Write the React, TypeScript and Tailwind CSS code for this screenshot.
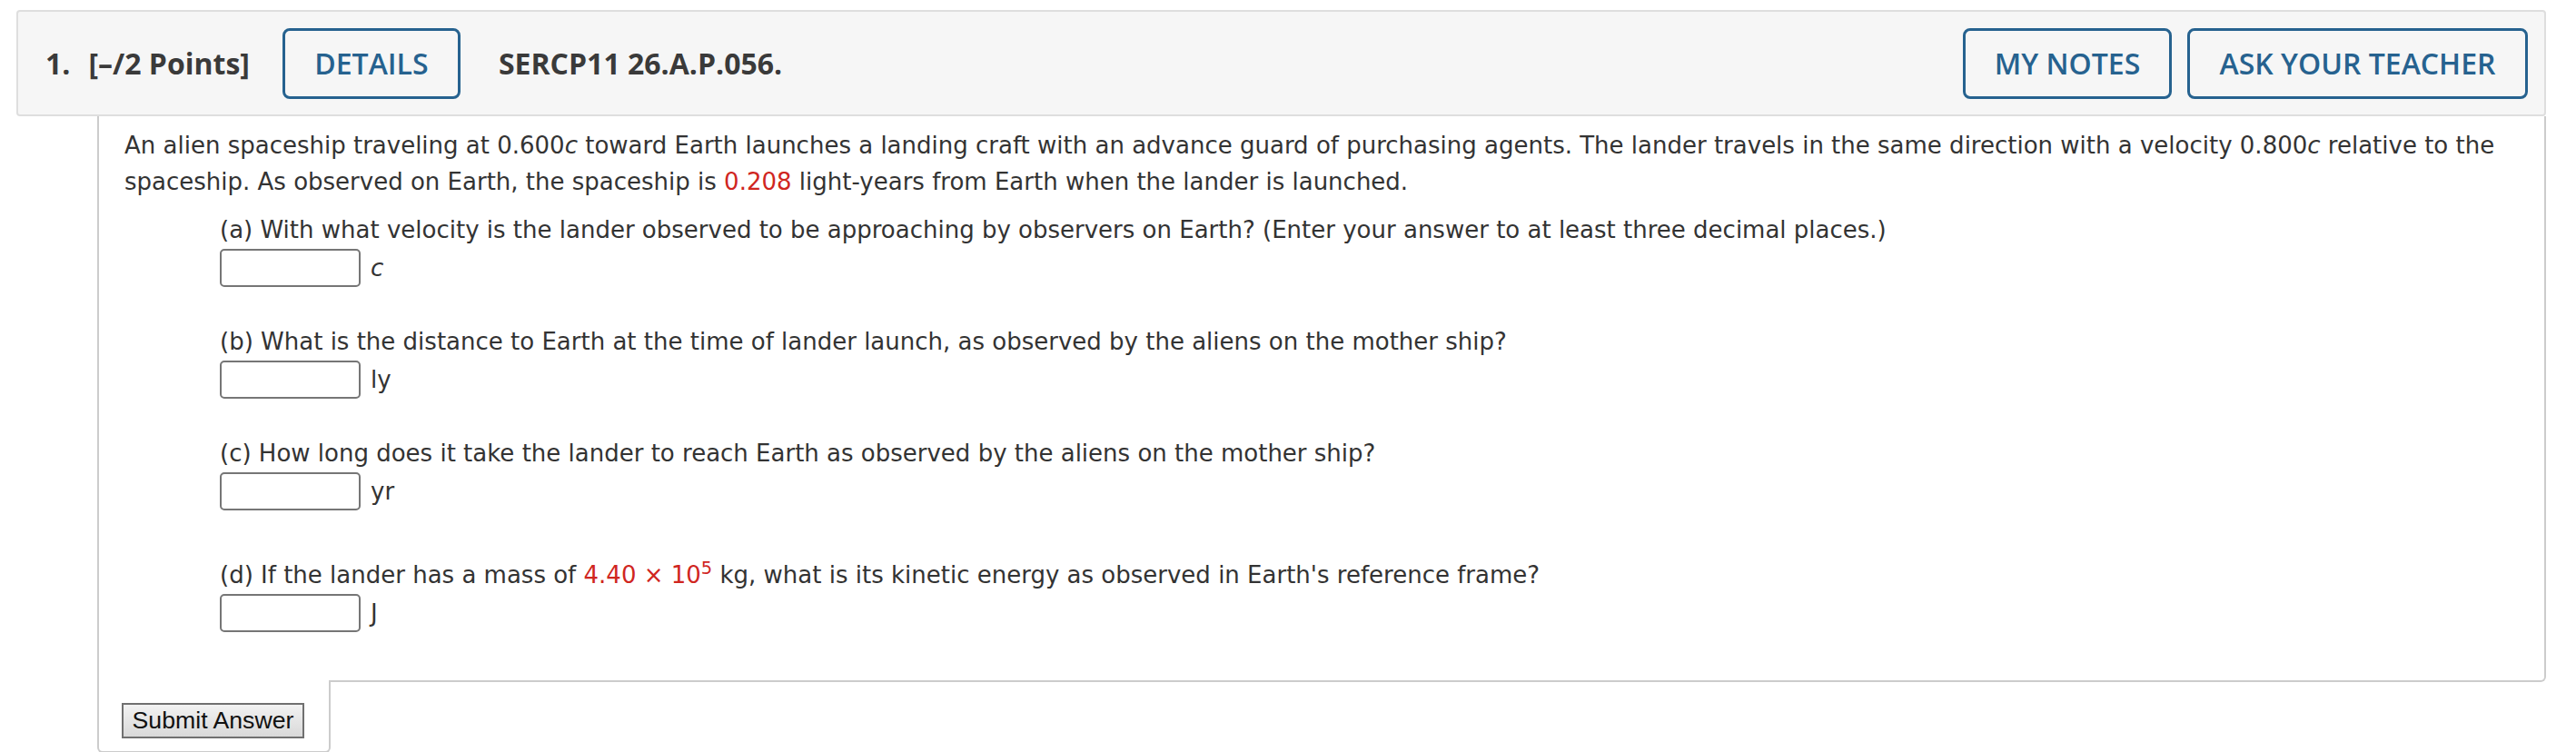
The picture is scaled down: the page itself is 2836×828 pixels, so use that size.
import React from 'react'

// Body text is Verdana on the original page; DejaVu Sans is the closest installed face.
const bodyFont = "font-[family-name:Verdana,'DejaVu_Sans',sans-serif]"
const headFont = "font-[family-name:'Open_Sans',sans-serif]"

function OutlineButton({ label, width }: { label: string; width: string }) {
  return (
    <button
      type="button"
      className={`${width} flex h-[78px] items-center justify-center rounded-[8px] border-[3px] border-[#26628f] bg-transparent text-[32px] font-semibold text-[#26628f] ${headFont}`}
    >
      {label}
    </button>
  )
}

function Answer({ unit, italic = false }: { unit: string; italic?: boolean }) {
  return (
    <div className="mt-px flex items-center">
      <input
        type="text"
        readOnly
        className="h-[42px] w-[155px] rounded-[5px] border-2 border-[#767676] bg-white outline-none"
      />
      <span className={italic ? 'ml-[11px] italic' : 'ml-[11px]'}>{unit}</span>
    </div>
  )
}

const Red = ({ children }: { children: React.ReactNode }) => (
  <span className="text-[#d0261f]">{children}</span>
)

export default function App() {
  return (
    <div className="min-h-[828px] w-full bg-white pt-[11px] pr-[33px] pl-[18px]">
      {/* question header bar */}
      <div className="flex h-[117px] items-center rounded-[4px] border-2 border-[#dedede] bg-[#f6f6f6] pr-[18px] pl-[30px]">
        <span className={`text-[32px] font-bold text-[#3a3a3a] ${headFont}`}>1.</span>
        <span className={`ml-[20px] text-[32px] font-bold text-[#3a3a3a] ${headFont}`}>[–/2 Points]</span>
        <div className="ml-[36px]">
          <OutlineButton label="DETAILS" width="w-[196px]" />
        </div>
        <span className={`ml-[42px] text-[32px] font-bold text-[#3a3a3a] ${headFont}`}>SERCP11 26.A.P.056.</span>
        <div className="ml-auto flex gap-[17px]">
          <OutlineButton label="MY NOTES" width="w-[230px]" />
          <OutlineButton label="ASK YOUR TEACHER" width="w-[375px]" />
        </div>
      </div>

      <div className={`ml-[89px] ${bodyFont} text-[26px] leading-[40px] text-[#333]`}>
        <div className="rounded-br-[6px] border-x-2 border-b-2 border-[#cccccc] pt-[12px] pr-[14px] pb-[53px] pl-[28px]">
          <p>
            An alien spaceship traveling at 0.600<i>c</i> toward Earth launches a landing craft with an advance guard of
            purchasing agents. The lander travels in the same direction with a velocity 0.800<i>c</i> relative to the
            spaceship. As observed on Earth, the spaceship is <Red>0.208</Red> light-years from Earth when the lander is
            launched.
          </p>

          <div className="ml-[105px]">
            <div className="mt-[13px]">
              <p>
                (a) With what velocity is the lander observed to be approaching by observers on Earth? (Enter your answer
                to at least three decimal places.)
              </p>
              <Answer unit="c" italic />
            </div>

            <div className="mt-[40px]">
              <p>(b) What is the distance to Earth at the time of lander launch, as observed by the aliens on the mother ship?</p>
              <Answer unit="ly" />
            </div>

            <div className="mt-[40px]">
              <p>(c) How long does it take the lander to reach Earth as observed by the aliens on the mother ship?</p>
              <Answer unit="yr" />
            </div>

            <div className="mt-[51px]">
              <p>
                (d) If the lander has a mass of{' '}
                <Red>
                  4.40 × 10<sup>5</sup>
                </Red>{' '}
                kg, what is its kinetic energy as observed in Earth's reference frame?
              </p>
              <Answer unit="J" />
            </div>
          </div>
        </div>

        {/* submit tab hangs below the box, covering its bottom edge */}
        <div className="-mt-[2px] w-[257px] rounded-b-[6px] border-x-2 border-b-2 border-[#cccccc] bg-white pt-[25px] pb-[14px] pl-[25px]">
          <button
            type="button"
            className="flex h-[39px] w-[201px] items-center justify-center border-2 border-[#707070] bg-gradient-to-b from-[#f2f2f2] to-[#d9d9d9] font-[family-name:'Liberation_Sans',Arial,sans-serif] text-[26.67px] leading-none text-[#111]"
          >
            Submit Answer
          </button>
        </div>
      </div>
    </div>
  )
}
